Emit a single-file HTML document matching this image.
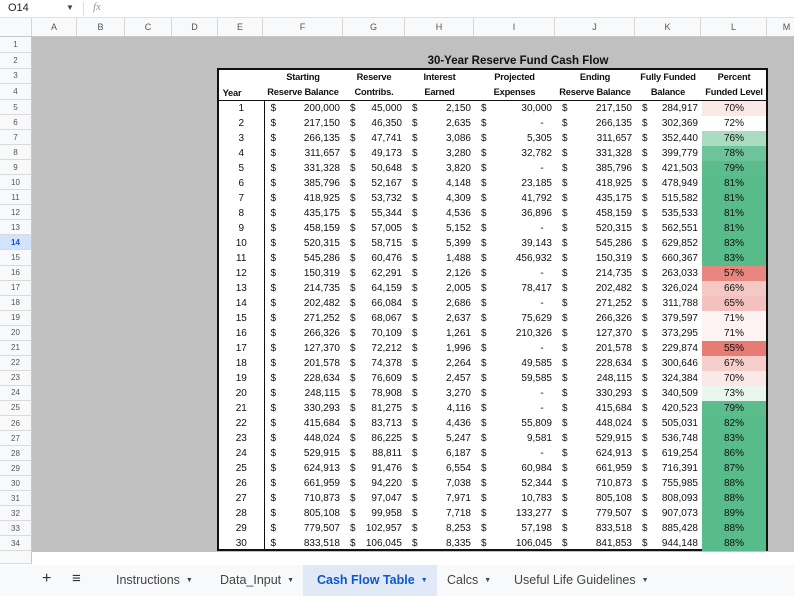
<!DOCTYPE html>
<html><head><meta charset="utf-8"><style>
*{margin:0;padding:0;box-sizing:border-box}
body{width:794px;height:596px;overflow:hidden;background:#fff;font-family:"Liberation Sans",Arial,sans-serif;position:relative}
.abs{position:absolute}
#fb{left:0;top:0;width:794px;height:18px;background:#fff;border-bottom:1px solid #e0e0e0}
#ch{left:0;top:18px;width:794px;height:19px;background:#f8f9fa;border-bottom:1px solid #c7c7c7}
.cl{position:absolute;top:0;height:18px;line-height:18px;font-size:9px;color:#555;text-align:center;border-right:1px solid #d6d6d6}
#gray{left:32px;top:37px;width:762px;height:515px;background:#c0c0c0}
#rn{left:0;top:37px;width:32px}
#rn div{font-size:8px;color:#555;text-align:center;border-bottom:1px solid #dadada;border-right:1px solid #c7c7c7;background:#f8f9fa;display:flex;align-items:center;justify-content:center}
#title{left:380px;top:55px;width:276px;text-align:center;font-weight:bold;font-size:11.5px;color:#111;white-space:nowrap}
#tbl{left:217px;top:68px;width:551px;height:483px;border:2px solid #111;background:#fff}
#hd{position:absolute;left:0;top:0;width:547px;height:31px;border-bottom:1px solid #111;font-size:9.3px;font-weight:bold;color:#111;letter-spacing:-0.2px}
#hd div{position:absolute;text-align:center;line-height:15px;white-space:nowrap}
table{position:absolute;left:0;top:31px;border-collapse:collapse;table-layout:fixed;font-size:10px;color:#111}
td{height:15px;padding:0 4px 0 0;text-align:right;white-space:nowrap;overflow:hidden;line-height:15px}
td i{font-style:normal;float:left;padding-left:6px}
td.y{text-align:center;padding:0;border-right:1px solid #111}
td.p{text-align:center;padding:0}
#tabs{left:0;top:565px;width:794px;height:31px;background:#f8f9fa;font-size:12.5px;color:#444}
#tabs>span{position:absolute;top:8px;white-space:nowrap}
.ar{font-size:7px;margin-left:6px;vertical-align:2px}
</style></head><body>
<div id="fb" class="abs">
<span class="abs" style="left:8px;top:2px;font-size:11px;color:#222">O14</span>
<span class="abs" style="left:66px;top:3px;font-size:8px;color:#444">▼</span>
<div class="abs" style="left:83px;top:2px;width:1px;height:14px;background:#ddd"></div>
<span class="abs" style="left:93px;top:1px;font-size:11px;font-style:italic;color:#999;font-family:'Liberation Serif',serif">fx</span>
</div>
<div id="ch" class="abs">
<div class="cl" style="left:0;width:32px;background:#f8f9fa"></div>
<div class="cl" style="left:32px;width:45px">A</div>
<div class="cl" style="left:77px;width:48px">B</div>
<div class="cl" style="left:125px;width:47px">C</div>
<div class="cl" style="left:172px;width:46px">D</div>
<div class="cl" style="left:218px;width:45px">E</div>
<div class="cl" style="left:263px;width:80px">F</div>
<div class="cl" style="left:343px;width:62px">G</div>
<div class="cl" style="left:405px;width:69px">H</div>
<div class="cl" style="left:474px;width:81px">I</div>
<div class="cl" style="left:555px;width:80px">J</div>
<div class="cl" style="left:635px;width:66px">K</div>
<div class="cl" style="left:701px;width:66px">L</div>
<div class="cl" style="left:767px;width:40px">M</div>
</div>
<div id="gray" class="abs"></div>
<div id="rn" class="abs">
<div style="height:15.75px">1</div><div style="height:15.75px">2</div><div style="height:15.75px">3</div><div style="height:15.75px">4</div>
<div style="height:15.05px">5</div><div style="height:15.05px">6</div><div style="height:15.05px">7</div><div style="height:15.05px">8</div><div style="height:15.05px">9</div><div style="height:15.05px">10</div><div style="height:15.05px">11</div><div style="height:15.05px">12</div><div style="height:15.05px">13</div><div style="height:15.05px;background:#d3e3fd;color:#0b57d0;font-weight:bold">14</div><div style="height:15.05px">15</div><div style="height:15.05px">16</div><div style="height:15.05px">17</div><div style="height:15.05px">18</div><div style="height:15.05px">19</div><div style="height:15.05px">20</div><div style="height:15.05px">21</div><div style="height:15.05px">22</div><div style="height:15.05px">23</div><div style="height:15.05px">24</div><div style="height:15.05px">25</div><div style="height:15.05px">26</div><div style="height:15.05px">27</div><div style="height:15.05px">28</div><div style="height:15.05px">29</div><div style="height:15.05px">30</div><div style="height:15.05px">31</div><div style="height:15.05px">32</div><div style="height:15.05px">33</div><div style="height:15.05px">34</div><div style="height:13px"></div>
</div>
<div id="title" class="abs">30-Year Reserve Fund Cash Flow</div>
<div id="tbl" class="abs">
<div id="hd">
<div style="left:0;top:16px;width:26px">Year</div>
<div style="left:44px;top:0;width:80px">Starting<br>Reserve Balance</div>
<div style="left:124px;top:0;width:62px">Reserve<br>Contribs.</div>
<div style="left:186px;top:0;width:69px">Interest<br>Earned</div>
<div style="left:255px;top:0;width:81px">Projected<br>Expenses</div>
<div style="left:336px;top:0;width:80px">Ending<br>Reserve Balance</div>
<div style="left:416px;top:0;width:66px">Fully Funded<br>Balance</div>
<div style="left:482px;top:0;width:66px">Percent<br>Funded Level</div>
</div>
<table>
<colgroup><col style="width:45px"><col style="width:80px"><col style="width:62px"><col style="width:69px"><col style="width:81px"><col style="width:80px"><col style="width:66px"><col style="width:64px"></colgroup>
<tr><td class="y">1</td><td><i>$</i>200,000</td><td><i>$</i>45,000</td><td><i>$</i>2,150</td><td><i>$</i>30,000</td><td><i>$</i>217,150</td><td><i>$</i>284,917</td><td class="p" style="background:#fbe9e8">70%</td></tr>
<tr><td class="y">2</td><td><i>$</i>217,150</td><td><i>$</i>46,350</td><td><i>$</i>2,635</td><td><i>$</i>-&nbsp;&nbsp;&nbsp;</td><td><i>$</i>266,135</td><td><i>$</i>302,369</td><td class="p" style="background:#fff">72%</td></tr>
<tr><td class="y">3</td><td><i>$</i>266,135</td><td><i>$</i>47,741</td><td><i>$</i>3,086</td><td><i>$</i>5,305</td><td><i>$</i>311,657</td><td><i>$</i>352,440</td><td class="p" style="background:#a9dcc0">76%</td></tr>
<tr><td class="y">4</td><td><i>$</i>311,657</td><td><i>$</i>49,173</td><td><i>$</i>3,280</td><td><i>$</i>32,782</td><td><i>$</i>331,328</td><td><i>$</i>399,779</td><td class="p" style="background:#6ec49a">78%</td></tr>
<tr><td class="y">5</td><td><i>$</i>331,328</td><td><i>$</i>50,648</td><td><i>$</i>3,820</td><td><i>$</i>-&nbsp;&nbsp;&nbsp;</td><td><i>$</i>385,796</td><td><i>$</i>421,503</td><td class="p" style="background:#5bbd8c">79%</td></tr>
<tr><td class="y">6</td><td><i>$</i>385,796</td><td><i>$</i>52,167</td><td><i>$</i>4,148</td><td><i>$</i>23,185</td><td><i>$</i>418,925</td><td><i>$</i>478,949</td><td class="p" style="background:#57bb8a">81%</td></tr>
<tr><td class="y">7</td><td><i>$</i>418,925</td><td><i>$</i>53,732</td><td><i>$</i>4,309</td><td><i>$</i>41,792</td><td><i>$</i>435,175</td><td><i>$</i>515,582</td><td class="p" style="background:#57bb8a">81%</td></tr>
<tr><td class="y">8</td><td><i>$</i>435,175</td><td><i>$</i>55,344</td><td><i>$</i>4,536</td><td><i>$</i>36,896</td><td><i>$</i>458,159</td><td><i>$</i>535,533</td><td class="p" style="background:#57bb8a">81%</td></tr>
<tr><td class="y">9</td><td><i>$</i>458,159</td><td><i>$</i>57,005</td><td><i>$</i>5,152</td><td><i>$</i>-&nbsp;&nbsp;&nbsp;</td><td><i>$</i>520,315</td><td><i>$</i>562,551</td><td class="p" style="background:#57bb8a">81%</td></tr>
<tr><td class="y">10</td><td><i>$</i>520,315</td><td><i>$</i>58,715</td><td><i>$</i>5,399</td><td><i>$</i>39,143</td><td><i>$</i>545,286</td><td><i>$</i>629,852</td><td class="p" style="background:#57bb8a">83%</td></tr>
<tr><td class="y">11</td><td><i>$</i>545,286</td><td><i>$</i>60,476</td><td><i>$</i>1,488</td><td><i>$</i>456,932</td><td><i>$</i>150,319</td><td><i>$</i>660,367</td><td class="p" style="background:#57bb8a">83%</td></tr>
<tr><td class="y">12</td><td><i>$</i>150,319</td><td><i>$</i>62,291</td><td><i>$</i>2,126</td><td><i>$</i>-&nbsp;&nbsp;&nbsp;</td><td><i>$</i>214,735</td><td><i>$</i>263,033</td><td class="p" style="background:#e8877f">57%</td></tr>
<tr><td class="y">13</td><td><i>$</i>214,735</td><td><i>$</i>64,159</td><td><i>$</i>2,005</td><td><i>$</i>78,417</td><td><i>$</i>202,482</td><td><i>$</i>326,024</td><td class="p" style="background:#f4c8c5">66%</td></tr>
<tr><td class="y">14</td><td><i>$</i>202,482</td><td><i>$</i>66,084</td><td><i>$</i>2,686</td><td><i>$</i>-&nbsp;&nbsp;&nbsp;</td><td><i>$</i>271,252</td><td><i>$</i>311,788</td><td class="p" style="background:#f3c2be">65%</td></tr>
<tr><td class="y">15</td><td><i>$</i>271,252</td><td><i>$</i>68,067</td><td><i>$</i>2,637</td><td><i>$</i>75,629</td><td><i>$</i>266,326</td><td><i>$</i>379,597</td><td class="p" style="background:#fdf3f2">71%</td></tr>
<tr><td class="y">16</td><td><i>$</i>266,326</td><td><i>$</i>70,109</td><td><i>$</i>1,261</td><td><i>$</i>210,326</td><td><i>$</i>127,370</td><td><i>$</i>373,295</td><td class="p" style="background:#fdf3f2">71%</td></tr>
<tr><td class="y">17</td><td><i>$</i>127,370</td><td><i>$</i>72,212</td><td><i>$</i>1,996</td><td><i>$</i>-&nbsp;&nbsp;&nbsp;</td><td><i>$</i>201,578</td><td><i>$</i>229,874</td><td class="p" style="background:#e67c73">55%</td></tr>
<tr><td class="y">18</td><td><i>$</i>201,578</td><td><i>$</i>74,378</td><td><i>$</i>2,264</td><td><i>$</i>49,585</td><td><i>$</i>228,634</td><td><i>$</i>300,646</td><td class="p" style="background:#f6cfcc">67%</td></tr>
<tr><td class="y">19</td><td><i>$</i>228,634</td><td><i>$</i>76,609</td><td><i>$</i>2,457</td><td><i>$</i>59,585</td><td><i>$</i>248,115</td><td><i>$</i>324,384</td><td class="p" style="background:#fbe9e8">70%</td></tr>
<tr><td class="y">20</td><td><i>$</i>248,115</td><td><i>$</i>78,908</td><td><i>$</i>3,270</td><td><i>$</i>-&nbsp;&nbsp;&nbsp;</td><td><i>$</i>330,293</td><td><i>$</i>340,509</td><td class="p" style="background:#eaf6f0">73%</td></tr>
<tr><td class="y">21</td><td><i>$</i>330,293</td><td><i>$</i>81,275</td><td><i>$</i>4,116</td><td><i>$</i>-&nbsp;&nbsp;&nbsp;</td><td><i>$</i>415,684</td><td><i>$</i>420,523</td><td class="p" style="background:#5bbd8c">79%</td></tr>
<tr><td class="y">22</td><td><i>$</i>415,684</td><td><i>$</i>83,713</td><td><i>$</i>4,436</td><td><i>$</i>55,809</td><td><i>$</i>448,024</td><td><i>$</i>505,031</td><td class="p" style="background:#57bb8a">82%</td></tr>
<tr><td class="y">23</td><td><i>$</i>448,024</td><td><i>$</i>86,225</td><td><i>$</i>5,247</td><td><i>$</i>9,581</td><td><i>$</i>529,915</td><td><i>$</i>536,748</td><td class="p" style="background:#57bb8a">83%</td></tr>
<tr><td class="y">24</td><td><i>$</i>529,915</td><td><i>$</i>88,811</td><td><i>$</i>6,187</td><td><i>$</i>-&nbsp;&nbsp;&nbsp;</td><td><i>$</i>624,913</td><td><i>$</i>619,254</td><td class="p" style="background:#57bb8a">86%</td></tr>
<tr><td class="y">25</td><td><i>$</i>624,913</td><td><i>$</i>91,476</td><td><i>$</i>6,554</td><td><i>$</i>60,984</td><td><i>$</i>661,959</td><td><i>$</i>716,391</td><td class="p" style="background:#57bb8a">87%</td></tr>
<tr><td class="y">26</td><td><i>$</i>661,959</td><td><i>$</i>94,220</td><td><i>$</i>7,038</td><td><i>$</i>52,344</td><td><i>$</i>710,873</td><td><i>$</i>755,985</td><td class="p" style="background:#57bb8a">88%</td></tr>
<tr><td class="y">27</td><td><i>$</i>710,873</td><td><i>$</i>97,047</td><td><i>$</i>7,971</td><td><i>$</i>10,783</td><td><i>$</i>805,108</td><td><i>$</i>808,093</td><td class="p" style="background:#57bb8a">88%</td></tr>
<tr><td class="y">28</td><td><i>$</i>805,108</td><td><i>$</i>99,958</td><td><i>$</i>7,718</td><td><i>$</i>133,277</td><td><i>$</i>779,507</td><td><i>$</i>907,073</td><td class="p" style="background:#57bb8a">89%</td></tr>
<tr><td class="y">29</td><td><i>$</i>779,507</td><td><i>$</i>102,957</td><td><i>$</i>8,253</td><td><i>$</i>57,198</td><td><i>$</i>833,518</td><td><i>$</i>885,428</td><td class="p" style="background:#57bb8a">88%</td></tr>
<tr><td class="y">30</td><td><i>$</i>833,518</td><td><i>$</i>106,045</td><td><i>$</i>8,335</td><td><i>$</i>106,045</td><td><i>$</i>841,853</td><td><i>$</i>944,148</td><td class="p" style="background:#57bb8a">88%</td></tr>
</table>
</div>
<div id="tabs" class="abs">
<span style="left:42px;top:5px;font-size:16px;color:#333">+</span>
<span style="left:72px;top:5px;font-size:15px;color:#333">≡</span>
<span style="left:116px">Instructions<span class="ar">▼</span></span>
<span style="left:220px">Data_Input<span class="ar">▼</span></span>
<div class="abs" style="left:303px;top:0;width:134px;height:31px;background:#e1e9f7"></div>
<span style="left:317px;color:#0b57d0;font-weight:bold">Cash Flow Table<span class="ar">▼</span></span>
<span style="left:447px">Calcs<span class="ar">▼</span></span>
<span style="left:514px">Useful Life Guidelines<span class="ar">▼</span></span>
</div>
</body></html>
